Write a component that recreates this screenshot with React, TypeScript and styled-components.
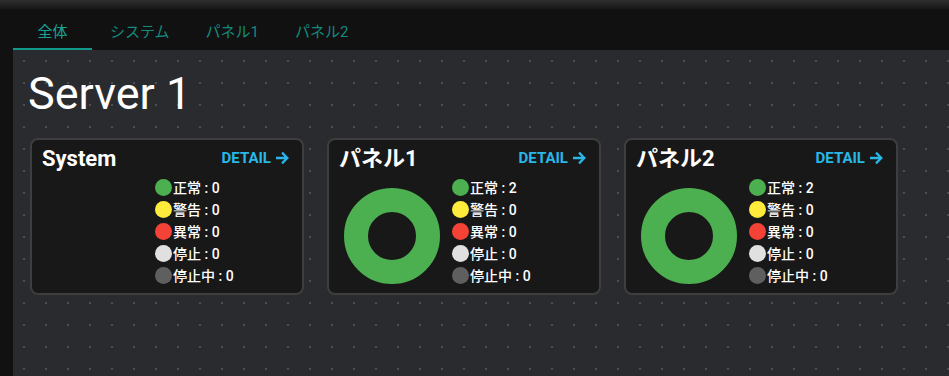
import React from "react";
import styled, { createGlobalStyle } from "styled-components";

const GlobalStyle = createGlobalStyle`
  html, body {
    margin: 0;
    padding: 0;
    background: #111111;
    font-family: Roboto, "Noto Sans CJK JP", sans-serif;
    color: #ffffff;
  }
`;

const Page = styled.div`
  width: 949px;
  height: 376px;
  overflow: hidden;
  display: flex;
  flex-direction: column;
  background: #111111;
`;

const TabBar = styled.nav`
  display: flex;
  height: 50px;
  padding-left: 13px;
  box-sizing: border-box;
  background: linear-gradient(#2f2f2f 0, #1a1a1a 8px, #111111 10px);
`;

const Tab = styled.div<{ $active?: boolean }>`
  display: flex;
  align-items: center;
  justify-content: center;
  min-width: ${(p) => (p.$active ? "79px" : "0")};
  padding: 12px 18px 0;
  box-sizing: border-box;
  font-size: 15px;
  color: ${(p) => (p.$active ? "#18a394" : "#138b7e")};
  border-bottom: 2px solid ${(p) => (p.$active ? "#119a8c" : "transparent")};
`;

const Content = styled.main`
  flex: 1;
  margin-left: 13px;
  padding: 17px 16px 0 17px;
  background-color: #2a2b2f;
  background-image: radial-gradient(circle, #4d4e53 1px, transparent 1.2px);
  background-size: 22px 22px;
  background-position: 0 0;
`;

const Heading = styled.h1`
  margin: 0 0 17px -2px;
  font-size: 45px;
  line-height: 54px;
  font-weight: 400;
  color: #ffffff;
`;

const CardRow = styled.div`
  display: flex;
  gap: 23px;
`;

const Card = styled.section`
  width: 274px;
  box-sizing: border-box;
  padding: 7px 12px 7px 10px;
  background: #181818;
  border: 2px solid #3e3e3e;
  border-radius: 8px;
`;

const CardHeader = styled.header`
  display: flex;
  align-items: center;
  justify-content: space-between;
  height: 24px;
  margin-bottom: 5px;
`;

const CardTitle = styled.h2`
  margin: 0;
  font-size: 22px;
  font-weight: 700;
  line-height: 24px;
  color: #ffffff;
`;

const DetailLink = styled.a`
  display: flex;
  align-items: center;
  gap: 3px;
  margin-top: -2px;
  font-size: 15px;
  font-weight: 700;
  color: #29b7e8;
  text-decoration: none;
`;

const CardBody = styled.div`
  display: grid;
  grid-template-columns: 113px 1fr;
`;

const ChartSlot = styled.div`
  display: flex;
  align-items: center;
  padding: 10px 0 0 5px;
`;

const Legend = styled.ul`
  margin: 0;
  padding: 0;
  list-style: none;
`;

const LegendItem = styled.li`
  display: flex;
  align-items: center;
  height: 22px;
  font-size: 14px;
  font-weight: 500;
  color: #ffffff;
`;

const Dot = styled.span<{ $color: string }>`
  width: 17px;
  height: 17px;
  border-radius: 50%;
  background: ${(p) => p.$color};
  margin-right: 1px;
`;

const STATUS = [
  { key: "ok", label: "正常", color: "#4caf50" },
  { key: "warn", label: "警告", color: "#ffeb3b" },
  { key: "err", label: "異常", color: "#f44336" },
  { key: "stop", label: "停止", color: "#e0e0e0" },
  { key: "stopping", label: "停止中", color: "#5f5f5f" },
];

type Counts = Record<string, number>;

const ArrowIcon = () => (
  <svg width="16" height="16" viewBox="0 0 24 24">
    <path
      d="M3 12h17M12 4l8 8-8 8"
      fill="none"
      stroke="currentColor"
      strokeWidth="3.4"
    />
  </svg>
);

const Donut: React.FC<{ counts: Counts }> = ({ counts }) => {
  const total = STATUS.reduce((s, x) => s + (counts[x.key] || 0), 0);
  if (!total) return null;
  const r = 36;
  const c = 2 * Math.PI * r;
  let offset = 0;
  return (
    <svg width="96" height="96" viewBox="0 0 96 96">
      <g transform="rotate(-90 48 48)">
        {STATUS.map((s) => {
          const n = counts[s.key] || 0;
          if (!n) return null;
          const len = (n / total) * c;
          const el = (
            <circle
              key={s.key}
              cx="48"
              cy="48"
              r={r}
              fill="none"
              stroke={s.color}
              strokeWidth="24"
              strokeDasharray={`${len} ${c - len}`}
              strokeDashoffset={-offset}
            />
          );
          offset += len;
          return el;
        })}
      </g>
    </svg>
  );
};

const StatusCard: React.FC<{ title: string; counts: Counts }> = ({
  title,
  counts,
}) => (
  <Card>
    <CardHeader>
      <CardTitle>{title}</CardTitle>
      <DetailLink href="#">
        DETAIL
        <ArrowIcon />
      </DetailLink>
    </CardHeader>
    <CardBody>
      <ChartSlot>
        <Donut counts={counts} />
      </ChartSlot>
      <Legend>
        {STATUS.map((s) => (
          <LegendItem key={s.key}>
            <Dot $color={s.color} />
            {s.label} : {counts[s.key] || 0}
          </LegendItem>
        ))}
      </Legend>
    </CardBody>
  </Card>
);

const cards = [
  { title: "System", counts: {} },
  { title: "パネル1", counts: { ok: 2 } },
  { title: "パネル2", counts: { ok: 2 } },
];

export default function App() {
  return (
    <Page>
      <GlobalStyle />
      <TabBar>
        <Tab $active>全体</Tab>
        <Tab>システム</Tab>
        <Tab>パネル1</Tab>
        <Tab>パネル2</Tab>
      </TabBar>
      <Content>
        <Heading>Server 1</Heading>
        <CardRow>
          {cards.map((c) => (
            <StatusCard key={c.title} title={c.title} counts={c.counts} />
          ))}
        </CardRow>
      </Content>
    </Page>
  );
}
